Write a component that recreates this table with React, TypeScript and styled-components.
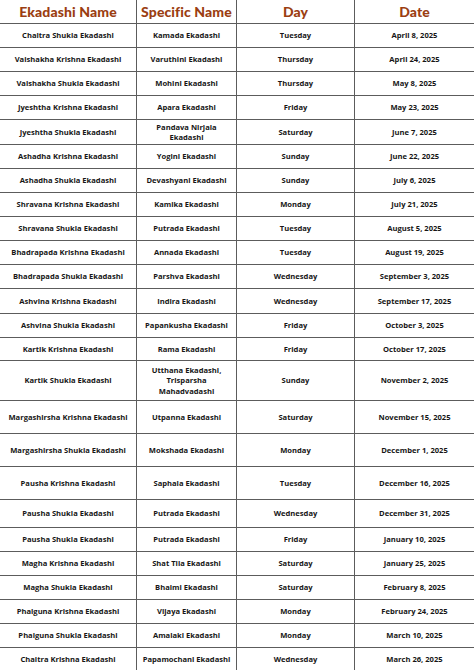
import React from "react";
import styled, { createGlobalStyle } from "styled-components";

const GlobalStyle = createGlobalStyle`
  html, body {
    margin: 0;
    padding: 0;
    background: #ffffff;
  }
`;

const Table = styled.div`
  width: 474px;
  height: 670px;
  overflow: hidden;
  background: #ffffff;
  font-family: "Open Sans", "Liberation Sans", sans-serif;
`;

const Row = styled.div<{ $h: number }>`
  display: grid;
  grid-template-columns: 137px 100px 118px 1fr;
  height: ${(p) => p.$h}px;
  box-sizing: border-box;
  border-bottom: 1px solid #5c5c5c;
`;

const Cell = styled.div`
  display: flex;
  align-items: center;
  justify-content: center;
  text-align: center;
  padding: 0 5px;
  box-sizing: border-box;
  border-right: 1px solid #5c5c5c;
  font-size: 7.6px;
  font-weight: 700;
  line-height: 10.5px;
  color: #161616;

  &:last-child {
    border-right: none;
  }
`;

const HeadCell = styled(Cell)`
  padding: 1px 0 0;
  white-space: nowrap;
  font-family: Lato, "Open Sans", sans-serif;
  font-size: 14px;
  font-weight: 900;
  line-height: 1;
  color: #9b3e12;
  letter-spacing: 0.1px;
`;

type Entry = [string, string, string, string, number];

const rows: Entry[] = [
  ["Chaitra Shukla Ekadashi", "Kamada Ekadashi", "Tuesday", "April 8, 2025", 24],
  ["Vaishakha Krishna Ekadashi", "Varuthini Ekadashi", "Thursday", "April 24, 2025", 24],
  ["Vaishakha Shukla Ekadashi", "Mohini Ekadashi", "Thursday", "May 8, 2025", 24],
  ["Jyeshtha Krishna Ekadashi", "Apara Ekadashi", "Friday", "May 23, 2025", 24],
  ["Jyeshtha Shukla Ekadashi", "Pandava Nirjala Ekadashi", "Saturday", "June 7, 2025", 25],
  ["Ashadha Krishna Ekadashi", "Yogini Ekadashi", "Sunday", "June 22, 2025", 24],
  ["Ashadha Shukla Ekadashi", "Devashyani Ekadashi", "Sunday", "July 6, 2025", 24],
  ["Shravana Krishna Ekadashi", "Kamika Ekadashi", "Monday", "July 21, 2025", 24],
  ["Shravana Shukla Ekadashi", "Putrada Ekadashi", "Tuesday", "August 5, 2025", 24],
  ["Bhadrapada Krishna Ekadashi", "Annada Ekadashi", "Tuesday", "August 19, 2025", 24],
  ["Bhadrapada Shukla Ekadashi", "Parshva Ekadashi", "Wednesday", "September 3, 2025", 24],
  ["Ashvina Krishna Ekadashi", "Indira Ekadashi", "Wednesday", "September 17, 2025", 25],
  ["Ashvina Shukla Ekadashi", "Papankusha Ekadashi", "Friday", "October 3, 2025", 24],
  ["Kartik Krishna Ekadashi", "Rama Ekadashi", "Friday", "October 17, 2025", 23],
  ["Kartik Shukla Ekadashi", "Utthana Ekadashi, Trisparsha Mahadvadashi", "Sunday", "November 2, 2025", 40],
  ["Margashirsha Krishna Ekadashi", "Utpanna Ekadashi", "Saturday", "November 15, 2025", 33],
  ["Margashirsha Shukla Ekadashi", "Mokshada Ekadashi", "Monday", "December 1, 2025", 33],
  ["Pausha Krishna Ekadashi", "Saphala Ekadashi", "Tuesday", "December 16, 2025", 33],
  ["Pausha Shukla Ekadashi", "Putrada Ekadashi", "Wednesday", "December 31, 2025", 28],
  ["Pausha Shukla Ekadashi", "Putrada Ekadashi", "Friday", "January 10, 2025", 24],
  ["Magha Krishna Ekadashi", "Shat Tila Ekadashi", "Saturday", "January 25, 2025", 24],
  ["Magha Shukla Ekadashi", "Bhaimi Ekadashi", "Saturday", "February 8, 2025", 24],
  ["Phalguna Krishna Ekadashi", "Vijaya Ekadashi", "Monday", "February 24, 2025", 24],
  ["Phalguna Shukla Ekadashi", "Amalaki Ekadashi", "Monday", "March 10, 2025", 24],
  ["Chaitra Krishna Ekadashi", "Papamochani Ekadashi", "Wednesday", "March 26, 2025", 24],
];

const App: React.FC = () => {
  return (
    <>
      <GlobalStyle />
      <Table>
        <Row $h={24}>
          <HeadCell>Ekadashi Name</HeadCell>
          <HeadCell>Specific Name</HeadCell>
          <HeadCell>Day</HeadCell>
          <HeadCell>Date</HeadCell>
        </Row>
        {rows.map(([name, specific, day, date, h], i) => (
          <Row key={i} $h={h}>
            <Cell>{name}</Cell>
            <Cell>{specific}</Cell>
            <Cell>{day}</Cell>
            <Cell>{date}</Cell>
          </Row>
        ))}
      </Table>
    </>
  );
};

export default App;
